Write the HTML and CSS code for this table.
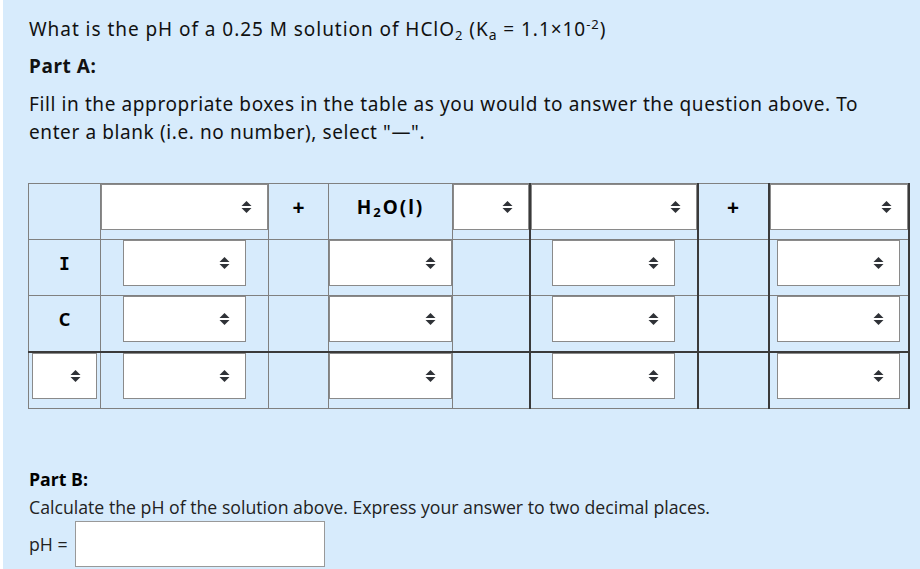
FILE: index.html
```html
<!DOCTYPE html>
<html>
<head>
<meta charset="utf-8">
<link rel="stylesheet" href="styles.css">
</head>
<body>
<div class="page">
  <p class="question">What is the pH of a 0.25 M solution of HClO<sub>2</sub> (K<sub class="ka">a</sub> = 1.1×10<sup>-2</sup>)</p>
  <p class="part">Part A:</p>
  <p class="instr">Fill in the appropriate boxes in the table as you would to answer the question above. To enter a blank (i.e. no number), select "—".</p>

  <table class="ice">
    <colgroup>
      <col class="c1"><col class="c2"><col class="c3"><col class="c4"><col class="c5"><col class="c6"><col class="c7"><col class="c8">
    </colgroup>
    <tr>
      <td></td>
      <td><div class="sel full"><svg class="arr" viewBox="0 0 11 12" width="11" height="12"><polygon points="0.5,5 5.5,0 10.5,5"/><polygon points="0.5,7 5.5,12 10.5,7"/></svg></div></td>
      <td class="sym">+</td>
      <td class="sym h2o">H<sub>2</sub>O(l)</td>
      <td><div class="sel full"><svg class="arr" viewBox="0 0 11 12" width="11" height="12"><polygon points="0.5,5 5.5,0 10.5,5"/><polygon points="0.5,7 5.5,12 10.5,7"/></svg></div></td>
      <td class="dr"><div class="sel full"><svg class="arr" viewBox="0 0 11 12" width="11" height="12"><polygon points="0.5,5 5.5,0 10.5,5"/><polygon points="0.5,7 5.5,12 10.5,7"/></svg></div></td>
      <td class="sym dr">+</td>
      <td class="dr"><div class="sel full"><svg class="arr" viewBox="0 0 11 12" width="11" height="12"><polygon points="0.5,5 5.5,0 10.5,5"/><polygon points="0.5,7 5.5,12 10.5,7"/></svg></div></td>
    </tr>
    <tr>
      <td class="lbl"><span class="serif">I</span></td>
      <td><div class="sel mid"><svg class="arr" viewBox="0 0 11 12" width="11" height="12"><polygon points="0.5,5 5.5,0 10.5,5"/><polygon points="0.5,7 5.5,12 10.5,7"/></svg></div></td>
      <td></td>
      <td><div class="sel full"><svg class="arr" viewBox="0 0 11 12" width="11" height="12"><polygon points="0.5,5 5.5,0 10.5,5"/><polygon points="0.5,7 5.5,12 10.5,7"/></svg></div></td>
      <td></td>
      <td class="dr"><div class="sel mid"><svg class="arr" viewBox="0 0 11 12" width="11" height="12"><polygon points="0.5,5 5.5,0 10.5,5"/><polygon points="0.5,7 5.5,12 10.5,7"/></svg></div></td>
      <td class="dr"></td>
      <td class="dr"><div class="sel mid"><svg class="arr" viewBox="0 0 11 12" width="11" height="12"><polygon points="0.5,5 5.5,0 10.5,5"/><polygon points="0.5,7 5.5,12 10.5,7"/></svg></div></td>
    </tr>
    <tr>
      <td class="lbl">C</td>
      <td><div class="sel mid"><svg class="arr" viewBox="0 0 11 12" width="11" height="12"><polygon points="0.5,5 5.5,0 10.5,5"/><polygon points="0.5,7 5.5,12 10.5,7"/></svg></div></td>
      <td></td>
      <td><div class="sel full"><svg class="arr" viewBox="0 0 11 12" width="11" height="12"><polygon points="0.5,5 5.5,0 10.5,5"/><polygon points="0.5,7 5.5,12 10.5,7"/></svg></div></td>
      <td></td>
      <td class="dr"><div class="sel mid"><svg class="arr" viewBox="0 0 11 12" width="11" height="12"><polygon points="0.5,5 5.5,0 10.5,5"/><polygon points="0.5,7 5.5,12 10.5,7"/></svg></div></td>
      <td class="dr"></td>
      <td class="dr"><div class="sel mid"><svg class="arr" viewBox="0 0 11 12" width="11" height="12"><polygon points="0.5,5 5.5,0 10.5,5"/><polygon points="0.5,7 5.5,12 10.5,7"/></svg></div></td>
    </tr>
    <tr class="last">
      <td><div class="sel small"><svg class="arr" viewBox="0 0 11 12" width="11" height="12"><polygon points="0.5,5 5.5,0 10.5,5"/><polygon points="0.5,7 5.5,12 10.5,7"/></svg></div></td>
      <td><div class="sel mid"><svg class="arr" viewBox="0 0 11 12" width="11" height="12"><polygon points="0.5,5 5.5,0 10.5,5"/><polygon points="0.5,7 5.5,12 10.5,7"/></svg></div></td>
      <td></td>
      <td><div class="sel full"><svg class="arr" viewBox="0 0 11 12" width="11" height="12"><polygon points="0.5,5 5.5,0 10.5,5"/><polygon points="0.5,7 5.5,12 10.5,7"/></svg></div></td>
      <td></td>
      <td class="dr"><div class="sel mid"><svg class="arr" viewBox="0 0 11 12" width="11" height="12"><polygon points="0.5,5 5.5,0 10.5,5"/><polygon points="0.5,7 5.5,12 10.5,7"/></svg></div></td>
      <td class="dr"></td>
      <td class="dr"><div class="sel mid"><svg class="arr" viewBox="0 0 11 12" width="11" height="12"><polygon points="0.5,5 5.5,0 10.5,5"/><polygon points="0.5,7 5.5,12 10.5,7"/></svg></div></td>
    </tr>
  </table>

  <div class="partb">
    <p class="btitle">Part B:</p>
    <p class="btext">Calculate the pH of the solution above. Express your answer to two decimal places.</p>
    <div class="phrow"><span>pH =</span><div class="phinput"></div></div>
  </div>
</div>
</body>
</html>
```
FILE: styles.css
```css
html, body {
  margin: 0;
  padding: 0;
  background: #ffffff;
}
.page {
  margin-left: 3px;
  height: 569px;
  box-sizing: border-box;
  background: #d7ebfc;
  padding: 15px 0 0 26px;
  font-family: "Noto Sans", "Open Sans", sans-serif;
  font-size: 19px;
  letter-spacing: 0.6px;
  color: #111;
  overflow: hidden;
}
p { margin: 0; }
.question { line-height: 28px; letter-spacing: 0.95px; }
.question sub { font-size: 13px; vertical-align: -4px; line-height: 0; }
.question sub.ka { font-size: 14px; }
.question sup { font-size: 13px; vertical-align: 7px; line-height: 0; }
.part { font-weight: bold; line-height: 28px; margin-top: 9px; }
.instr { line-height: 28px; margin-top: 10px; padding-right: 30px; }

.ice {
  border-collapse: collapse;
  margin: 37px 0 0 -1px;
  table-layout: fixed;
  width: 881px;
  letter-spacing: 0;
}
.c1 { width: 72px; }
.c2 { width: 168px; }
.c3 { width: 60px; }
.c4 { width: 124px; }
.c5 { width: 77px; }
.c6 { width: 168px; }
.c7 { width: 71px; }
.c8 { width: 140px; }
.ice td {
  border: 1px solid #808080;
  padding: 0 0 9px 0;
  height: 46px;
  vertical-align: middle;
  text-align: center;
}
.ice td.dr { border-left: 2px solid #3a3a3a; }
.ice td:last-child { border-right: 2px solid #3a3a3a; }
.ice tr.last td { border-top: 2px solid #3a3a3a; }
.sym { font-weight: bold; font-size: 21px; color: #000; }
.h2o { font-size: 19px; letter-spacing: 2px; }
.h2o sub { font-size: 13px; vertical-align: -3px; line-height: 0; }
.lbl { font-weight: bold; font-size: 18px; color: #000; }
.serif { font-family: "DejaVu Sans Mono", monospace; font-size: 18px; }

.sel {
  box-sizing: border-box;
  height: 46px;
  background: #fff;
  border: 1px solid #8a8a8a;
  display: flex;
  align-items: center;
  justify-content: flex-end;
  padding-right: 15px;
}
.sel.full { width: 100%; }
.sel.mid { width: 123px; margin: 0 auto; }
.sel.small { width: 65px; margin: 0 auto; }
.arr { display: block; fill: #2f3237; }

.partb {
  margin-top: 56px;
  font-family: "Open Sans", "Noto Sans", sans-serif;
  font-size: 17.7px;
  letter-spacing: 0;
  color: #222;
}
.btitle { font-weight: bold; line-height: 28px; color: #000; }
.btext { line-height: 28px; }
.phrow {
  display: flex;
  align-items: center;
  gap: 7px;
  margin-top: 0;
}
.phinput {
  width: 250px;
  height: 46px;
  box-sizing: border-box;
  background: #fff;
  border: 1px solid #999;
}
```
